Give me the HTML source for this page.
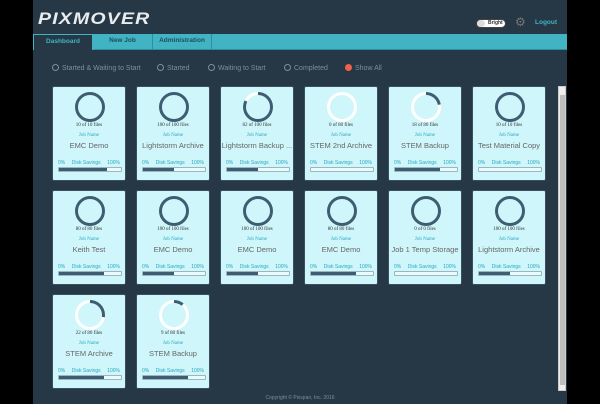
<!DOCTYPE html>
<html><head><meta charset="utf-8"><style>
*{margin:0;padding:0;box-sizing:border-box}
body{width:600px;height:404px;background:#000;position:relative;overflow:hidden;font-family:"Liberation Sans",sans-serif}
#app{position:absolute;left:33px;top:0;width:534px;height:404px;background:#263746}
.logo{position:absolute;left:5px;top:9px;font:italic bold 17px "Liberation Sans",sans-serif;color:#e8ecee;letter-spacing:1px;transform:scaleX(1.15);transform-origin:left}
.tabs{position:absolute;left:0;top:34px;width:534px;height:16px;background:#42b3c2;border-bottom:1px solid #2f8f9c}
.tab{position:absolute;top:0;height:15px;font-size:6.5px;font-weight:bold;color:#1d4f5c;text-align:center;line-height:14px;border-right:1px solid #2f8f9c}
.tab.active{background:#263746;color:#42b3c2;border:1px solid #42b3c2;border-bottom:none;height:16px}
.filters{position:absolute;top:64px;left:0;font-size:7px;color:#7f8e98}
.f{position:absolute;white-space:nowrap;line-height:8px}
.f i{display:inline-block;width:7px;height:7px;border:1px solid #7f8e98;border-radius:50%;vertical-align:-1px;margin-right:3px}
.card{position:absolute;width:74px;height:95px;background:#cff6fa;border:1px solid #3a5060;border-radius:2px;text-align:center}
.card svg{position:absolute;left:21px;top:4px}
.files{position:absolute;top:36px;width:100%;font:5px "Liberation Serif",serif;color:#333}
.jn{position:absolute;top:46px;width:100%;font:5px "Liberation Serif",serif;color:#2aa8bf}
.ti{position:absolute;top:54px;width:100%;font-size:7.5px;color:#666;white-space:nowrap;overflow:hidden}
.lab{position:absolute;top:73px;left:5px;right:5px;font-size:5px;color:#2aa8bf;display:flex;justify-content:space-between}
.bar{position:absolute;top:80px;left:5px;width:64px;height:5px;border:1px solid #9bb6c0;border-radius:1px;background:#e9fbfd}
.bar b{display:block;height:100%;background:#3d5d72}
.sb{position:absolute;left:525px;top:86px;width:8px;height:305px;background:#eee;border:1px solid #ccc}
.sb div{position:absolute;left:1px;top:8px;width:5px;height:290px;background:#bdbdbd}
</style></head><body>
<div id="app">
<div class="logo">PIXMOVER</div>
<div style="position:absolute;left:443px;top:19px;width:30px;height:9px;border-radius:5px;background:#fff;border:1px solid #444;font-size:5px;font-weight:bold;color:#333;line-height:7px;padding-left:11px">Bright<span style="position:absolute;left:0;top:0;width:8px;height:7px;border-radius:50%;background:#ddd"></span></div>
<div style="position:absolute;left:482px;top:15px;font-size:12px;color:#777">⚙</div>
<div style="position:absolute;left:502px;top:19px;font-size:6.5px;font-weight:bold;color:#42b3c2">Logout</div>
<div class="tabs">
<div class="tab active" style="left:0;width:60px">Dashboard</div>
<div class="tab" style="left:60px;width:60px">New Job</div>
<div class="tab" style="left:120px;width:59px">Administration</div>
</div>
<div class="filters">
<div class="f" style="left:19px"><i></i>Started &amp; Waiting to Start</div>
<div class="f" style="left:124px"><i></i>Started</div>
<div class="f" style="left:175px"><i></i>Waiting to Start</div>
<div class="f" style="left:251px"><i></i>Completed</div>
<div class="f" style="left:312px"><i style="background:#f0604a;border-color:#f0604a"></i>Show All</div>
</div>
<div id="cards"></div>
<div class="sb"><div></div></div>
<div style="position:absolute;left:0;width:534px;top:395px;text-align:center;font-size:5px;color:#7f8e98">Copyright © Pixspan, Inc. 2016</div>
</div>
<script>
var d=[["10 of 10 files","EMC Demo",1,.77],["100 of 100 files","Lightstorm Archive",1,.5],["82 of 100 files","Lightstorm Backup ...",.82,.5],["0 of 80 files","STEM 2nd Archive",0,0],["18 of 80 files","STEM Backup",.22,.72],["10 of 10 files","Test Material Copy",1,0],
["80 of 80 files","Keith Test",1,.72],["100 of 100 files","EMC Demo",1,.5],["100 of 100 files","EMC Demo",1,.5],["80 of 80 files","EMC Demo",1,.72],["0 of 0 files","Job 1 Temp Storage",1,0],["100 of 100 files","Lightstorm Archive",1,.5],
["22 of 80 files","STEM Archive",.275,.72],["9 of 80 files","STEM Backup",.11,.72]];
var h="",C=2*Math.PI*13.5;
d.forEach(function(c,i){var x=19+(i%6)*84,y=86+Math.floor(i/6)*104;
h+='<div class="card" style="left:'+x+'px;top:'+y+'px"><svg width="32" height="32"><circle cx="16" cy="16" r="13.5" fill="none" stroke="#fff" stroke-width="3"/><circle cx="16" cy="16" r="13.5" fill="none" stroke="#3d5d72" stroke-width="3" stroke-dasharray="'+(C*c[2])+' '+C+'" transform="rotate(-90 16 16)"/></svg><div class="files">'+c[0]+'</div><div class="jn">Job Name</div><div class="ti">'+c[1]+'</div><div class="lab"><span>0%</span><span>Disk Savings</span><span>100%</span></div><div class="bar"><b style="width:'+(c[3]*100)+'%"></b></div></div>';});
document.getElementById("cards").innerHTML=h;
</script>
</body></html>
